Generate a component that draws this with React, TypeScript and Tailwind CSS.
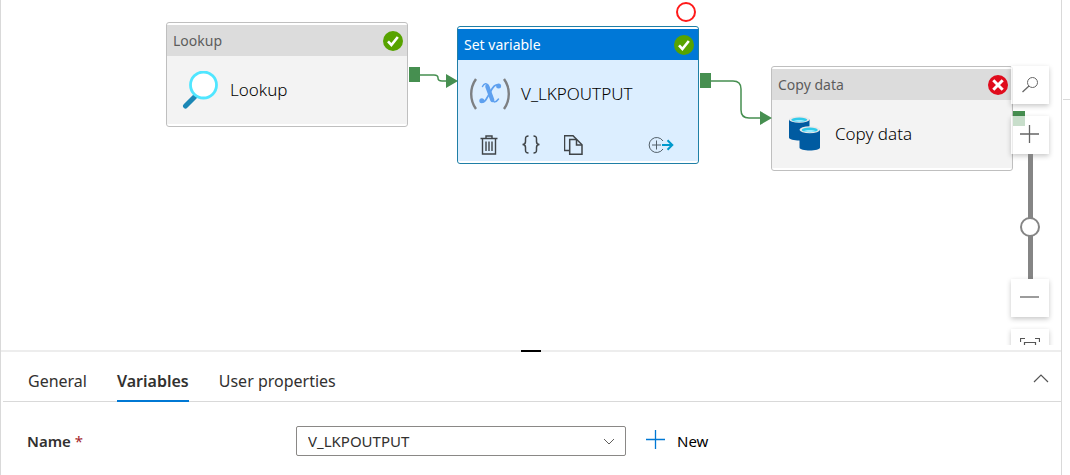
import React, { useState } from "react";
import { clsx } from "clsx";

type Status = "success" | "error";

interface ActivityNodeProps {
  type: string;
  name: string;
  status: Status;
  selected?: boolean;
  icon: React.ReactNode;
  className?: string;
  children?: React.ReactNode;
}

const StatusBadge: React.FC<{ status: Status }> = ({ status }) => (
  <svg width="20" height="20" viewBox="0 0 20 20" role="img" aria-label={status}>
    <circle cx="10" cy="10" r="10" fill={status === "success" ? "#57a300" : "#e00b1c"} />
    {status === "success" ? (
      <path d="M5 10.3l3.4 3.7L14.8 6" fill="none" stroke="#fff" strokeWidth="2.6" />
    ) : (
      <path d="M5.3 5.3l9.4 9.4M14.7 5.3l-9.4 9.4" fill="none" stroke="#fff" strokeWidth="3" />
    )}
  </svg>
);

const LookupIcon = () => (
  <svg width="36" height="38" viewBox="0 0 36 38" aria-hidden="true">
    <path d="M12.5 26L3.5 35" stroke="#1b87b5" strokeWidth="5" strokeLinecap="round" />
    <circle cx="21.5" cy="14" r="13" fill="#fff" stroke="#50e6ff" strokeWidth="2.8" />
  </svg>
);

const VariableIcon = () => (
  <svg width="40" height="32" viewBox="0 0 40 32" fill="none" aria-hidden="true">
    <path d="M6 1C-0.4 10-0.4 22 6 31M34 1C40.4 10 40.4 22 34 31" stroke="#7d7f82" strokeWidth="2.4" />
    <g stroke="#5ea0ef" strokeLinecap="round">
      <path d="M12.5 8.5C14 5.500 17 4.500 18.200 8L22.500 21.500C23.500 25 26 24.500 28.500 21" strokeWidth="1.500" />
      <path d="M17.300 8.500L22.300 22" strokeWidth="4.200" />
      <path d="M29 7.500C25 5 22.500 10 20 14.500C17 20 14.500 25.500 11.500 23.500" strokeWidth="1.800" />
    </g>
    <circle cx="28.600" cy="8" r="2.500" fill="#5ea0ef" />
    <circle cx="11.800" cy="22.800" r="2.500" fill="#5ea0ef" />
  </svg>
);

const CopyDataIcon = () => (
  <svg width="32" height="36" viewBox="0 0 32 36" aria-hidden="true">
    <path d="M0 3.5v18c0 4 20.5 4 20.5 0v-18z" fill="#005ba1" />
    <ellipse cx="10.25" cy="3.5" rx="10.25" ry="3.3" fill="#e8e8e8" />
    <ellipse cx="10.25" cy="3.7" rx="8" ry="2.2" fill="#32cbea" />
    <path d="M4 5.1c3-1.600 9.500-1.600 12.500 0-3 1.100-9.500 1.100-12.500 0z" fill="#9cebff" />
    <path d="M10.500 14v17.500c0 4 20.500 4 20.500 0V14z" fill="#005ba1" />
    <ellipse cx="20.75" cy="13.7" rx="10.25" ry="3.5" fill="#e8e8e8" />
    <ellipse cx="20.75" cy="13.9" rx="8" ry="2.3" fill="#32cbea" />
    <path d="M14.500 15.300c3-1.600 9.500-1.600 12.500 0-3 1.100-9.500 1.100-12.500 0z" fill="#9cebff" />
  </svg>
);

const TrashIcon = () => (
  <svg width="18" height="20" viewBox="0 0 18 20" fill="none" stroke="#3f4448" strokeWidth="1.4">
    <path d="M0.5 3.5h17M6 3.5V1h6v2.5M2.5 3.5v15.5h13V3.5" />
    <path d="M6 6.5v9.5M9 6.5v9.5M12 6.5v9.5" />
  </svg>
);

const BracesIcon = () => (
  <svg width="18" height="20" viewBox="0 0 18 20" fill="none" stroke="#3f4448" strokeWidth="1.5">
    <path d="M6.5 1C3.800 1 3.500 2 3.500 4v2.500C3.500 8.500 2.500 9.500 0.500 9.500c2 0 3 1 3 3V15c0 2 .3 3 3 3" />
    <path d="M11.5 1c2.700 0 3 1 3 3v2.500c0 2 1 3 3 3-2 0-3 1-3 3V15c0 2-.3 3-3 3" />
  </svg>
);

const CloneIcon = () => (
  <svg width="19" height="20" viewBox="0 0 19 20" fill="none" stroke="#3f4448" strokeWidth="1.5">
    <path d="M5.500 15.500h-5V.7h8.500l3.500 3.500" />
    <path d="M5.700 4.500h7l5.300 5.300v9.400H5.700z" />
    <path d="M12.500 4.500V10H18" />
  </svg>
);

const AddOutputIcon = () => (
  <svg width="26" height="18" viewBox="0 0 26 18" fill="none">
    <path d="M15 5A7.500 7.500 0 1 0 15 13" stroke="#53606a" />
    <path d="M8.500 4.500v9M4 9h9" stroke="#53606a" />
    <path d="M14 9h10M19.500 4.200L24.300 9l-4.800 4.800" stroke="#0099cc" strokeWidth="2" />
  </svg>
);

const ActivityNode: React.FC<ActivityNodeProps> = ({
  type,
  name,
  status,
  selected,
  icon,
  className,
  children,
}) => (
  <div
    className={clsx(
      "absolute w-[242px] rounded-[3px] border bg-white py-[2px]",
      selected ? "border-[#1f7fa6]" : "border-[#bfbfbf]",
      className
    )}
  >
    <div
      className={clsx(
        "flex h-[31px] items-center justify-between pr-1 pl-[6px] text-sm",
        selected ? "bg-[#0078d7] text-white" : "bg-[#dcdcdc] text-[#5c5c5c]"
      )}
    >
      <span>{type}</span>
      <StatusBadge status={status} />
    </div>
    <div className={selected ? "bg-[#dceeff]" : "bg-[#f3f3f3]"}>
      <div className="flex h-[68px] items-center text-black">
        {icon}
        <span className="text-[17px] font-light">{name}</span>
      </div>
      {children}
    </div>
  </div>
);

const Connectors = () => (
  <svg className="absolute top-0 left-0 h-full w-full" aria-hidden="true">
    <g fill="none" stroke="#468f50" strokeWidth="1.5">
      <path d="M420 75h14q4 0 4 3t4 3h5" />
      <path d="M711 81h22q8 0 8 8v21q0 8 8 8h12" />
    </g>
    <g fill="#468f50">
      <path d="M409 67h11v15h-11zM446 74l12 7-12 7z" />
      <path d="M700 73h11v15h-11zM760 111l12 7-12 7z" />
      <path d="M1013 111h12v15h-12z" />
    </g>
  </svg>
);

const toolButton =
  "flex h-[38px] w-[38px] shrink-0 items-center justify-center bg-white/70 shadow-[0_2px_5px_rgba(0,0,0,0.22)]";

const ZoomToolbar = () => {
  const [zoom, setZoom] = useState(40);

  return (
    <div className="absolute top-[56px] right-1 bottom-[5px] flex flex-col items-center overflow-hidden px-2 pt-[10px]">
      <button type="button" aria-label="Search" className={clsx(toolButton, "mb-3")}>
        <svg width="18" height="18" viewBox="0 0 18 18" fill="none" stroke="#666">
          <circle cx="11.5" cy="6.500" r="5" />
          <path d="M8 10L1.500 16" strokeWidth="1.300" />
        </svg>
      </button>
      <button type="button" aria-label="Zoom in" className={toolButton}>
        <svg width="20" height="20" viewBox="0 0 20 20" stroke="#666" strokeWidth="1.3">
          <path d="M9.5 0v18M0 9h19" />
        </svg>
      </button>
      <input
        type="range"
        aria-label="Zoom level"
        min={0}
        max={100}
        value={zoom}
        onChange={(e) => setZoom(Number(e.target.value))}
        className="h-[125px] w-5 shrink-0 appearance-none bg-transparent [direction:rtl] [writing-mode:vertical-lr] [&::-webkit-slider-runnable-track]:w-[5px] [&::-webkit-slider-runnable-track]:bg-[#858585] [&::-webkit-slider-thumb]:-ml-2 [&::-webkit-slider-thumb]:h-5 [&::-webkit-slider-thumb]:w-5 [&::-webkit-slider-thumb]:appearance-none [&::-webkit-slider-thumb]:rounded-full [&::-webkit-slider-thumb]:border-2 [&::-webkit-slider-thumb]:border-[#858585] [&::-webkit-slider-thumb]:bg-white"
      />
      <button type="button" aria-label="Zoom out" className={clsx(toolButton, "mb-3")}>
        <svg width="20" height="20" viewBox="0 0 20 20" stroke="#666" strokeWidth="1.3">
          <path d="M0 9h19" />
        </svg>
      </button>
      <button type="button" aria-label="Zoom to fit" className={toolButton}>
        <svg width="20" height="20" viewBox="0 0 20 20" fill="none" stroke="#555" strokeWidth="1.2">
          <path d="M.5 4V.5H5M15 .5h4.500V4M.5 15v4.500H5M15 19.500h4.500V15" />
          <path d="M4.500 4.500h11v11h-11z" />
        </svg>
      </button>
    </div>
  );
};

const tabs = ["General", "Variables", "User properties"];

const PropertiesPanel = () => {
  const [activeTab, setActiveTab] = useState("Variables");
  const [variable, setVariable] = useState("V_LKPOUTPUT");

  return (
    <section className="text-[#323130]">
      <div className="ml-[2px] flex h-[50px] items-end justify-between border-b border-[#d9d9d9] pr-3 pl-[25px]">
        <div role="tablist" className="-mb-px flex gap-[30px] text-base">
          {tabs.map((tab) => (
            <button
              key={tab}
              type="button"
              role="tab"
              aria-selected={tab === activeTab}
              onClick={() => setActiveTab(tab)}
              className={clsx(
                "h-10 border-b-2",
                tab === activeTab ? "border-[#0078d4] font-semibold" : "border-transparent"
              )}
            >
              {tab}
            </button>
          ))}
        </div>
        <button type="button" aria-label="Expand panel" className="mb-[18px]">
          <svg width="16" height="9" viewBox="0 0 16 9" fill="none" stroke="#555" strokeWidth="1.2">
            <path d="M1 8l7-7 7 7" />
          </svg>
        </button>
      </div>

      <div className="flex items-center pt-6 pl-[26px]">
        <label htmlFor="variable-name" className="w-[269px] text-[15px] font-semibold">
          Name <span className="font-normal text-[#a4262c]">*</span>
        </label>
        <div className="relative">
          <select
            id="variable-name"
            value={variable}
            onChange={(e) => setVariable(e.target.value)}
            className="h-[30px] w-[330px] appearance-none rounded-[2px] border border-[#8a8886] bg-white px-[11px] text-[15px]"
          >
            <option>V_LKPOUTPUT</option>
          </select>
          <svg
            className="pointer-events-none absolute top-3 right-[11px]"
            width="12"
            height="8"
            viewBox="0 0 12 8"
            fill="none"
            stroke="#605e5c"
          >
            <path d="M1 1l5 5 5-5" />
          </svg>
        </div>
        <button type="button" className="ml-5 flex items-center gap-3 text-[15px] text-black">
          <svg width="19" height="19" viewBox="0 0 19 19" stroke="#0078d4" strokeWidth="1.3" className="mb-1">
            <path d="M9.5 0v19M0 9.5h19" />
          </svg>
          New
        </button>
      </div>
    </section>
  );
};

export default function App() {
  return (
    <div className="flex min-h-screen bg-white font-['Noto_Sans','Open_Sans',sans-serif]">
      <main className="flex min-w-0 flex-1 flex-col border-x border-[#d9d9d9]">
        <div className="relative h-[350px] overflow-hidden">
          <div className="absolute top-0 -left-px h-full w-full">
            <ActivityNode
              type="Lookup"
              name="Lookup"
              status="success"
              className="top-[22px] left-[166px]"
              icon={
                <span className="w-[63px] pl-[15px]">
                  <LookupIcon />
                </span>
              }
            />
            <ActivityNode
              type="Set variable"
              name="V_LKPOUTPUT"
              status="success"
              selected
              className="top-[26px] left-[457px]"
              icon={
                <span className="w-[63px] pl-3">
                  <VariableIcon />
                </span>
              }
            >
              <div className="flex h-[33px] items-center gap-6 pr-6 pl-[22px]">
                <button type="button" aria-label="Delete">
                  <TrashIcon />
                </button>
                <button type="button" aria-label="View code">
                  <BracesIcon />
                </button>
                <button type="button" aria-label="Clone">
                  <CloneIcon />
                </button>
                <button type="button" aria-label="Add output" className="ml-auto">
                  <AddOutputIcon />
                </button>
              </div>
            </ActivityNode>
            <ActivityNode
              type="Copy data"
              name="Copy data"
              status="error"
              className="top-[66px] left-[771px]"
              icon={
                <span className="w-[63px] pl-[17px]">
                  <CopyDataIcon />
                </span>
              }
            />
            <Connectors />
            <span className="absolute top-[2px] left-[676px] h-5 w-5 rounded-full border-2 border-[#ff1a1a]" />
          </div>
          <ZoomToolbar />
        </div>

        <div className="flex h-[2px] shrink-0 justify-center bg-[#ededed]">
          <div className="w-5 bg-black" />
        </div>

        <PropertiesPanel />
      </main>
      <aside className="w-2 shrink-0 pl-px">
        <div className="h-[100px] border-b border-[#d9d9d9]" />
      </aside>
    </div>
  );
}
